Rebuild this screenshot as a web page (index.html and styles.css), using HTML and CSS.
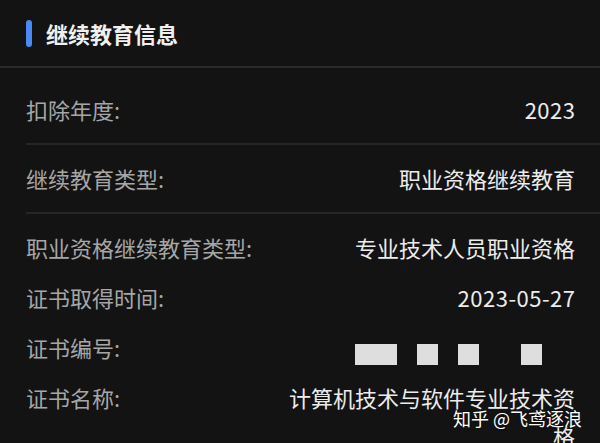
FILE: index.html
```html
<!DOCTYPE html>
<html lang="zh-CN">
<head>
<meta charset="utf-8">
<link rel="stylesheet" href="styles.css">
</head>
<body>
<div class="card">
  <div class="head">
    <span class="bar"></span>
    <h2 class="title">继续教育信息</h2>
  </div>
  <div class="group bordered">
    <div class="row line"><span class="label">扣除年度:</span><span class="value num">2023</span></div>
    <div class="row line"><span class="label">继续教育类型:</span><span class="value">职业资格继续教育</span></div>
  </div>
  <div class="group plain">
    <div class="row"><span class="label">职业资格继续教育类型:</span><span class="value">专业技术人员职业资格</span></div>
    <div class="row"><span class="label">证书取得时间:</span><span class="value num">2023-05-27</span></div>
    <div class="row"><span class="label">证书编号:</span>
      <span class="redact">
        <i class="blk wide"></i><i class="blk"></i><i class="blk"></i><i class="blk gap"></i>
      </span>
    </div>
    <div class="row"><span class="label">证书名称:</span><span class="value">计算机技术与软件专业技术资格</span></div>
  </div>
  <div class="watermark">知乎 @飞鸢逐浪</div>
</div>
</body>
</html>
```

FILE: styles.css
```css
html, body {
  margin: 0;
  padding: 0;
  background: #131313;
}
body {
  width: 600px;
  height: 443px;
  overflow: hidden;
  font-family: "Noto Sans CJK SC", "Noto Sans", sans-serif;
}
.card {
  position: relative;
  width: 600px;
  height: 443px;
}
.head {
  display: flex;
  align-items: center;
  height: 66px;
  padding-left: 26px;
  border-bottom: 2px solid #2b2b2b;
  box-sizing: content-box;
}
.bar {
  width: 6px;
  height: 27px;
  border-radius: 3px;
  background: #4a8af5;
  margin-right: 14px;
}
.title {
  margin: 0;
  font-size: 22px;
  font-weight: 700;
  color: #f0f0f0;
  line-height: 30px;
}
.group {
  padding-top: 8px;
}
.row {
  display: flex;
  justify-content: space-between;
  align-items: flex-start;
  margin-left: 26px;
  padding: 6px 25px 6px 0;
  font-size: 22px;
  line-height: 38px;
}
.row.line {
  padding: 14px 25px 15px 0;
  border-bottom: 2px solid #262626;
}
.label {
  flex-shrink: 0;
  color: #a6a6a6;
}
.value {
  max-width: 290px;
  text-align: right;
  color: #ececec;
}
.value.num {
  letter-spacing: 0.5px;
  margin-right: -0.5px;
}
.redact {
  display: flex;
  margin-top: 16px;
  margin-right: 33px;
}
.blk {
  display: block;
  width: 21px;
  height: 21px;
  background: #dedede;
  margin-left: 20px;
}
.blk.wide {
  width: 42px;
  margin-left: 0;
}
.blk.gap {
  margin-left: 42px;
}
.watermark {
  position: absolute;
  left: 453px;
  top: 408px;
  font-size: 18px;
  line-height: 20px;
  color: #ffffff;
  text-shadow: 0 0 2px rgba(0,0,0,0.6);
  white-space: nowrap;
}
```
